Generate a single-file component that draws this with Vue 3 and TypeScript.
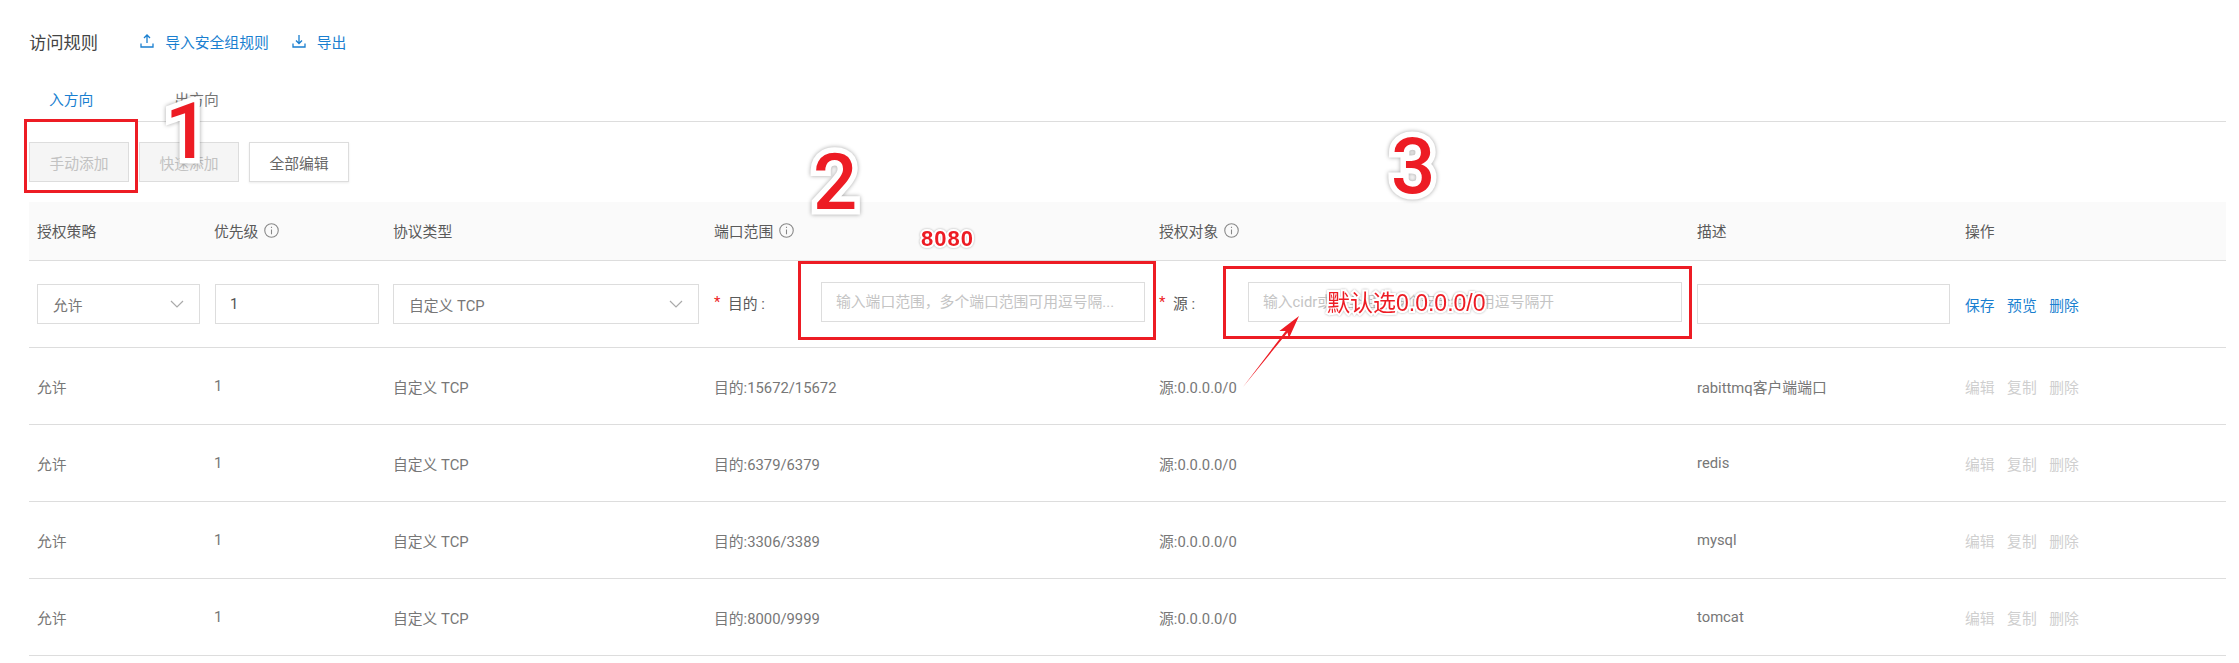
<script setup lang="ts">
interface Rule { port: string; source: string; desc: string }
const columns = [
  { label: '授权策略', info: false },
  { label: '优先级', info: true },
  { label: '协议类型', info: false },
  { label: '端口范围', info: true },
  { label: '授权对象', info: true },
  { label: '描述', info: false },
  { label: '操作', info: false },
]
const rules: Rule[] = [
  { port: '目的:15672/15672', source: '源:0.0.0.0/0', desc: 'rabittmq客户端端口' },
  { port: '目的:6379/6379', source: '源:0.0.0.0/0', desc: 'redis' },
  { port: '目的:3306/3389', source: '源:0.0.0.0/0', desc: 'mysql' },
  { port: '目的:8000/9999', source: '源:0.0.0.0/0', desc: 'tomcat' },
]
</script>

<template>
  <div class="page">
    <header class="head">
      <h2 class="title">访问规则</h2>
      <a class="link first">
        <svg class="ico" viewBox="0 0 14 14"><path d="M7 1v8M4 4l3-3 3 3M1 9.5V13h12V9.5" /></svg>
        导入安全组规则
      </a>
      <a class="link">
        <svg class="ico" viewBox="0 0 14 14"><path d="M7 1v8M4 6.5l3 3 3-3M1 9.5V13h12V9.5" /></svg>
        导出
      </a>
    </header>

    <nav class="tabs">
      <span class="tab active">入方向</span>
      <span class="tab">出方向</span>
    </nav>

    <div class="toolbar">
      <button class="btn" disabled>手动添加</button>
      <button class="btn" disabled>快速添加</button>
      <button class="btn normal">全部编辑</button>
    </div>

    <div class="row thead">
      <div v-for="c in columns" :key="c.label" class="cell">
        {{ c.label }}
        <svg v-if="c.info" class="info" viewBox="0 0 14 14">
          <circle cx="7" cy="7" r="6.3" />
          <path d="M7 6v4.5M7 3.4v1.2" />
        </svg>
      </div>
    </div>

    <div class="row edit">
      <div class="cell">
        <div class="select policy">允许<svg class="chev" viewBox="0 0 14 8"><path d="M1 1l6 6 6-6" /></svg></div>
      </div>
      <div class="cell"><input class="input prio" value="1" /></div>
      <div class="cell">
        <div class="select proto">自定义 TCP<svg class="chev" viewBox="0 0 14 8"><path d="M1 1l6 6 6-6" /></svg></div>
      </div>
      <div class="cell raised">
        <span class="star">*</span><span class="lab port-lab">目的 :</span>
        <input class="input port" placeholder="输入端口范围，多个端口范围可用逗号隔..." />
      </div>
      <div class="cell raised">
        <span class="star">*</span><span class="lab src-lab">源 :</span>
        <input class="input src" placeholder="输入cidr或安全组，多个安全组可用逗号隔开" />
      </div>
      <div class="cell"><input class="input desc" /></div>
      <div class="cell actions blue"><a>保存</a><a>预览</a><a>删除</a></div>
    </div>

    <div v-for="r in rules" :key="r.port" class="row data">
      <div class="cell">允许</div>
      <div class="cell">1</div>
      <div class="cell">自定义 TCP</div>
      <div class="cell">{{ r.port }}</div>
      <div class="cell">{{ r.source }}</div>
      <div class="cell">{{ r.desc }}</div>
      <div class="cell actions off"><a>编辑</a><a>复制</a><a>删除</a></div>
    </div>

    <!-- red hand-drawn annotations over the screenshot -->
    <div class="box b1"></div>
    <div class="box b2"></div>
    <div class="box b3"></div>
    <span class="num n1">1</span>
    <span class="num n2">2</span>
    <span class="num n3">3</span>
    <span class="note n8080">8080</span>
    <span class="note ndefault">默认选0.0.0.0/0</span>
    <svg class="arrow" viewBox="0 0 62 78">
      <polygon points="3,75 47.5,20.4 48.8,26.5 59,4 39.4,19.1 45.7,19" />
    </svg>
  </div>
</template>

<style>
html, body { margin: 0; background: #fff; }
</style>

<style scoped>
.page {
  position: relative;
  width: 2239px;
  height: 663px;
  overflow: hidden;
  box-sizing: border-box;
  padding-left: 29px;
  padding-right: 13px;
  font-family: Roboto, "Noto Sans CJK SC", sans-serif;
  font-size: 14.8px;
  color: #777;
  background: #fff;
}
.head { display: flex; align-items: center; height: 84px; box-sizing: border-box; padding-bottom: 2px; }
.title { margin: 0; font-size: 17.3px; font-weight: 400; color: #444; }
.link { display: flex; align-items: center; gap: 11px; color: #1a7fd0; margin-left: 23px; }
.link.first { margin-left: 42px; }
.ico { width: 14px; height: 14px; fill: none; stroke: #1a7fd0; stroke-width: 1.3; }
.tabs {
  display: flex;
  gap: 81px;
  height: 38px;
  box-sizing: border-box;
  padding: 0 20px 8px;
  align-items: center;
  border-bottom: 1.5px solid #ddd;
}
.tab { color: #777; }
.tab.active { color: #1a7fd0; }
.toolbar { display: flex; gap: 10px; padding: 20px 0; }
.btn {
  width: 100px;
  height: 40px;
  box-sizing: border-box;
  border: 1.5px solid #ddd;
  background: #f5f5f5;
  color: #c2c2c2;
  font: inherit;
  padding: 0;
}
.btn.normal { background: #fff; color: #666; box-shadow: 0 1px 2px rgba(0, 0, 0, 0.08); }
.row {
  display: grid;
  grid-template-columns: 177px 179px 321px 445px 538px 268px 269px;
  box-sizing: border-box;
  border-bottom: 1.5px solid #ddd;
}
.cell { display: flex; align-items: center; padding-left: 8px; min-width: 0; }
.thead { height: 59px; background: #fafafa; color: #5a5a5a; padding-bottom: 2px; }
.edit { height: 87px; }
.data { height: 77px; }
.info {
  width: 15px;
  height: 15px;
  margin-left: 6px;
  fill: none;
  stroke: #888;
  stroke-width: 1;
}
.select, .input {
  height: 40px;
  box-sizing: border-box;
  border: 1.5px solid #ddd;
  background: #fff;
  font: inherit;
  color: #777;
  outline: none;
}
.select {
  display: flex;
  align-items: center;
  justify-content: space-between;
  padding: 0 15px;
}
.policy { width: 163px; }
.proto { width: 306px; }
.chev { width: 14px; height: 8px; fill: none; stroke: #aaa; stroke-width: 1.2; }
.input { padding: 0 14px; }
.input::placeholder { color: #c4c4c4; opacity: 1; }
.prio { width: 164px; margin-left: 1px; margin-top: -1px; color: #555; }
.raised { margin-top: -4px; }
.star { color: #ed1c24; width: 14px; flex: none; }
.lab { color: #5a5a5a; flex: none; }
.port-lab { width: 93px; }
.port { width: 324px; }
.src-lab { width: 75px; }
.src { width: 434px; margin-left: 0; }
.desc { width: 253px; padding: 0; }
.actions { gap: 12.5px; }
.actions.blue { color: #1a7fd0; }
.actions.off { color: #cfcfcf; }

.box { position: absolute; box-sizing: border-box; border: 3px solid #ed1c24; }
.b1 { left: 24px; top: 119px; width: 114px; height: 74px; }
.b2 { left: 798px; top: 261px; width: 358px; height: 79px; }
.b3 { left: 1223px; top: 266px; width: 469px; height: 73px; }
.num {
  position: absolute;
  font-family: Roboto, "Liberation Sans", sans-serif;
  font-weight: 500;
  font-size: 78px;
  line-height: 78px;
  color: #ed1c24;
  -webkit-text-stroke: 11px #fff;
  paint-order: stroke fill;
  filter: drop-shadow(0 0 2px rgba(0, 0, 0, 0.35));
}
.n1 { left: 165px; top: 93px; }
.n2 { left: 813px; top: 144px; }
.n3 { left: 1391px; top: 128px; }
.note {
  position: absolute;
  font-family: "Liberation Sans", "Noto Sans CJK SC", sans-serif;
  color: #ed1c24;
  -webkit-text-stroke: 4px #fff;
  paint-order: stroke fill;
  filter: drop-shadow(0 0 1px rgba(0, 0, 0, 0.3));
  white-space: nowrap;
}
.n8080 { left: 921px; top: 226px; font-size: 22px; line-height: 26px; letter-spacing: 1px; font-weight: 700; }
.ndefault { left: 1327px; top: 287px; font-size: 23px; line-height: 32px; }
.arrow { position: absolute; left: 1240px; top: 312px; width: 62px; height: 78px; fill: #ed1c24; }
</style>
